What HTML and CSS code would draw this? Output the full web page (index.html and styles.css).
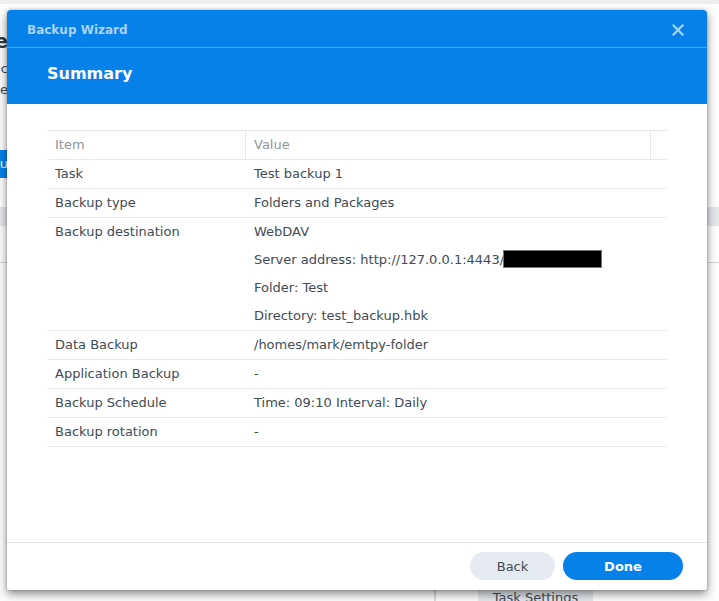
FILE: index.html
```html
<!DOCTYPE html>
<html>
<head>
<meta charset="utf-8">
<link rel="stylesheet" href="styles.css">
</head>
<body>
<div class="page">
  <div class="bg-top"></div>
  <div class="bg-left">
    <div class="bg-title">Create</div>
    <div class="bg-desc">Backup task c</div>
    <div class="bg-desc">Schedule one</div>
    <div class="bg-btn">Backu</div>
  </div>
  <div class="bg-band"></div>
  <div class="bg-line"></div>
  <div class="bg-bottom">
    <div class="bg-vline"></div>
    <div class="bg-task">Task Settings</div>
  </div>
</div>

<div class="dialog">
  <div class="dlg-head">
    <div class="titlebar">
      <span class="title">Backup Wizard</span>
      <span class="close">
        <svg width="12" height="12" viewBox="0 0 12 12"><path d="M1.5 1.5 L10.5 10.5 M10.5 1.5 L1.5 10.5" stroke="#a9d3fb" stroke-width="2.2" stroke-linecap="square"/></svg>
      </span>
    </div>
    <div class="step">Summary</div>
  </div>
  <div class="dlg-body">
    <div class="table">
      <div class="row head">
        <div class="c1">Item</div>
        <div class="c2">Value</div>
        <div class="c3"></div>
      </div>
      <div class="row"><div class="c1">Task</div><div class="c2">Test backup 1</div></div>
      <div class="row"><div class="c1">Backup type</div><div class="c2">Folders and Packages</div></div>
      <div class="row"><div class="c1">Backup destination</div>
        <div class="c2 multi">
          <div>WebDAV</div>
          <div>Server address: http://127.0.0.1:4443/<span class="redact"></span></div>
          <div>Folder: Test</div>
          <div>Directory: test_backup.hbk</div>
        </div>
      </div>
      <div class="row"><div class="c1">Data Backup</div><div class="c2">/homes/mark/emtpy-folder</div></div>
      <div class="row"><div class="c1">Application Backup</div><div class="c2">-</div></div>
      <div class="row"><div class="c1">Backup Schedule</div><div class="c2">Time: 09:10 Interval: Daily</div></div>
      <div class="row"><div class="c1">Backup rotation</div><div class="c2">-</div></div>
    </div>
  </div>
  <div class="dlg-foot">
    <button class="btn back">Back</button>
    <button class="btn done">Done</button>
  </div>
</div>
</body>
</html>
```
FILE: styles.css
```css
* { box-sizing: border-box; }
html, body { margin: 0; padding: 0; }
body {
  width: 719px;
  height: 601px;
  overflow: hidden;
  background: #ffffff;
  font-family: "DejaVu Sans", Verdana, sans-serif;
  color: #414b55;
  position: relative;
}

/* background page */
.page {
  height: 601px;
  display: flex;
  flex-direction: column;
  background: #fdfdfd;
}
.bg-top { height: 4px; background: #eceef0; }
.bg-left {
  width: 8px;
  overflow: hidden;
  display: flex;
  flex-direction: column;
  align-items: flex-end;
}
.bg-title {
  margin-top: 25px;
  font-size: 20px;
  font-weight: bold;
  color: #2f3a44;
  white-space: nowrap;
  height: 26px;
}
.bg-desc {
  font-size: 13px;
  color: #414b55;
  white-space: nowrap;
  height: 21px;
  line-height: 21px;
}
.bg-title + .bg-desc { margin-top: 3px; }
.bg-btn {
  margin-top: 50px;
  width: 58px;
  height: 28px;
  line-height: 28px;
  background: #0781ea;
  color: #fff;
  font-size: 13px;
  text-align: right;
  white-space: nowrap;
}
.bg-band { margin-top: 29px; height: 19px; background: #e3e6ea; }
.bg-line { margin-top: 36px; height: 1px; background: #d2d6db; }
.bg-bottom { flex: 1; display: flex; align-items: flex-end; padding-left: 434px; }
.bg-vline { width: 2px; height: 20px; background: #d6d9dd; }
.bg-task {
  margin-left: 42px;
  width: 115px;
  height: 17px;
  background: #e3e7ec;
  font-size: 13px;
  color: #414b55;
  text-align: center;
  line-height: 28px;
  overflow: hidden;
  white-space: nowrap;
}

/* dialog */
.dialog {
  position: absolute;
  left: 7px;
  top: 10px;
  width: 700px;
  height: 580px;
  background: #fff;
  border-radius: 4px 4px 2px 2px;
  box-shadow: 0 4px 10px rgba(0,0,0,0.45), 0 0 3px rgba(0,0,0,0.25);
  display: flex;
  flex-direction: column;
  overflow: hidden;
}
.dlg-head { background: #0781ea; height: 94px; }
.titlebar {
  height: 38px;
  border-bottom: 1px solid #4aa3ef;
  display: flex;
  align-items: center;
  justify-content: space-between;
  padding: 2px 23px 0 20px;
}
.title { color: #a9d3fb; font-size: 12px; font-weight: bold; }
.close { display: flex; width: 12px; height: 12px; }
.step {
  color: #fff;
  font-weight: bold;
  font-size: 16px;
  padding: 16px 0 0 40px;
}

.dlg-body { flex: 1; padding: 26px 40px 0 40px; }
.table { border-top: 1px solid #e1e6ec; }
.row {
  display: flex;
  border-bottom: 1px solid #e6eaef;
  font-size: 13px;
}
.row .c1 { width: 199px; padding: 0 8px; line-height: 28px; white-space: nowrap; }
.row .c2 { flex: 1; padding: 0 8px; line-height: 28px; white-space: nowrap; }
.row.head { color: #8c949c; }
.row.head .c1 { border-right: 1px solid #e6eaef; }
.row.head .c2 { flex: 1; }
.row.head .c3 { width: 17px; border-left: 1px solid #e6eaef; }
.redact {
  display: inline-block;
  width: 97px;
  height: 16px;
  background: #000;
  vertical-align: -3px;
  outline: 1px solid #777;
}

.dlg-foot {
  height: 48px;
  border-top: 1px solid #dfe5ec;
  display: flex;
  justify-content: flex-end;
  align-items: flex-start;
  gap: 8px;
  padding: 9px 24px 0 0;
}
.btn {
  height: 28px;
  border: none;
  border-radius: 14px;
  font-family: "DejaVu Sans", Verdana, sans-serif;
  font-size: 13px;
  cursor: pointer;
}
.btn.back { width: 85px; background: #e6ebf2; color: #414b55; }
.btn.done { width: 120px; background: #0781ea; color: #fff; font-weight: 600; }
```
